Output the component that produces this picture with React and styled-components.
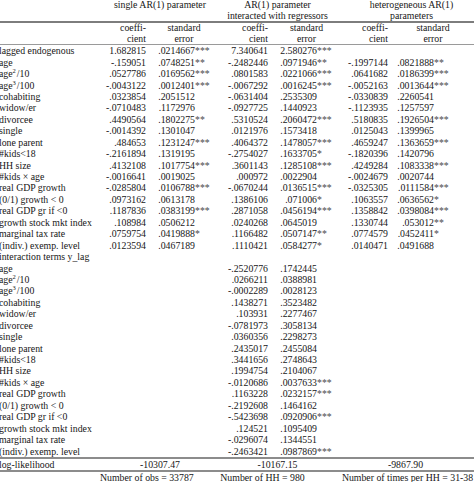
import React from 'react';
import styled, { createGlobalStyle } from 'styled-components';

const GlobalStyle = createGlobalStyle`
  html, body { margin: 0; padding: 0; background: #fff; overflow: hidden; }
`;

const COLS = '101px 48px 72px 50px 65px 55px 86px';
const ROW_H = 11.45;

const Page = styled.div`
  margin-left: -1px;
  width: 477px;
  font-family: "Liberation Serif", "Times New Roman", serif;
  font-size: 9.8px;
  color: #161616;
`;

const Row = styled.div`
  display: grid;
  grid-template-columns: ${COLS};
  height: ${(p) => p.$h || ROW_H}px;
  align-items: center;
  white-space: nowrap;
`;

const GroupHead = styled.div`
  grid-column: ${(p) => p.$col} / span 2;
  text-align: center;
  line-height: 10.5px;
  padding-left: ${(p) => p.$shift || 0}px;
`;

const Rule = styled.div`
  height: ${(p) => p.$w || 1}px;
  background: ${(p) => p.$c || '#8c8c8c'};
`;

const Label = styled.div`
  grid-column: 1;
`;

const Sup = styled.sup`
  font-size: 6.5px;
  vertical-align: 4px;
  line-height: 0;
  margin-right: 1px;
`;

const Coef = styled.div`
  grid-column: ${(p) => p.$col};
  text-align: right;
  padding-right: 2px;
  line-height: ${(p) => p.$lh || 'normal'};
`;

const SE = styled.div`
  grid-column: ${(p) => p.$col};
  padding-left: ${(p) => p.$pad}px;
`;

const Num = styled.span`
  display: inline-block;
  width: 37px;
  text-align: right;
`;

const Stars = styled.span`
  color: #4a4a4a;
  font-size: 9.8px;
`;

const HeadSE = styled.div`
  grid-column: ${(p) => p.$col};
  text-align: center;
  line-height: 10.5px;
  padding-left: ${(p) => p.$shift || 0}px;
`;

const Wide = styled.div`
  grid-column: ${(p) => p.$col} / span 2;
  text-align: center;
  padding-right: ${(p) => p.$pr || 0}px;
  padding-left: ${(p) => p.$pl || 0}px;
`;

const LabelCell = ({ name }) => {
  if (name === 'age2') return <Label>age<Sup>2</Sup>/10</Label>;
  if (name === 'age3') return <Label>age<Sup>3</Sup>/100</Label>;
  return <Label>{name}</Label>;
};

const SECells = ({ v, col, pad }) => {
  if (!v) return null;
  const m = v.match(/^([^*]*)(\**)$/);
  return (
    <SE $col={col} $pad={pad}>
      <Num>{m[1]}</Num>
      {m[2] && <Stars>{m[2]}</Stars>}
    </SE>
  );
};

const SE_PAD = { 3: 10, 5: 10, 7: 7 };

const DataRow = ({ r }) => (
  <Row>
    <LabelCell name={r[0]} />
    {r[1] && <Coef $col={2}>{r[1]}</Coef>}
    <SECells v={r[2]} col={3} pad={SE_PAD[3]} />
    {r[3] && <Coef $col={4}>{r[3]}</Coef>}
    <SECells v={r[4]} col={5} pad={SE_PAD[5]} />
    {r[5] && <Coef $col={6}>{r[5]}</Coef>}
    <SECells v={r[6]} col={7} pad={SE_PAD[7]} />
  </Row>
);

const block1 = [
  ['lagged endogenous', '1.682815', '.0214667***', '7.340641', '2.580276***', '', ''],
  ['age', '-.159051', '.0748251**', '-.2482446', '.0971946**', '-.1997144', '.0821888**'],
  ['age2', '.0527786', '.0169562***', '.0801583', '.0221066***', '.0641682', '.0186399***'],
  ['age3', '-.0043122', '.0012401***', '-.0067292', '.0016245***', '-.0052163', '.0013644***'],
  ['cohabiting', '.0323854', '.2051512', '-.0631404', '.2535309', '-.0330839', '.2260541'],
  ['widow/er', '-.0710483', '.1172976', '-.0927725', '.1440923', '-.1123935', '.1257597'],
  ['divorcee', '.4490564', '.1802275**', '.5310524', '.2060472***', '.5180835', '.1926504***'],
  ['single', '-.0014392', '.1301047', '.0121976', '.1573418', '.0125043', '.1399965'],
  ['lone parent', '.484653', '.1231247***', '.4064372', '.1478057***', '.4659247', '.1363659***'],
  ['#kids<18', '-.2161894', '.1319195', '-.2754027', '.1633705*', '-.1820396', '.1420796'],
  ['HH size', '.4132108', '.1017754***', '.3601143', '.1285108***', '.4249284', '.1083338***'],
  ['#kids × age', '-.0016641', '.0019025', '.000972', '.0022904', '-.0024679', '.0020744'],
  ['real GDP growth', '-.0285804', '.0106788***', '-.0670244', '.0136515***', '-.0325305', '.0111584***'],
  ['(0/1) growth < 0', '.0973162', '.0613178', '.1386106', '.071006*', '.1063557', '.0636562*'],
  ['real GDP gr if <0', '.1187836', '.0383199***', '.2871058', '.0456194***', '.1358842', '.0398084***'],
  ['growth stock mkt index', '.108984', '.0506212', '.0240268', '.0645019', '.1330744', '.053012**'],
  ['marginal tax rate', '.0759754', '.0419888*', '.1166482', '.0507147**', '.0774579', '.0452411*'],
  ['(indiv.) exemp. level', '.0123594', '.0467189', '.1110421', '.0584277*', '.0140471', '.0491688'],
];

const block2 = [
  ['age', '', '', '-.2520776', '.1742445', '', ''],
  ['age2', '', '', '.0266211', '.0388981', '', ''],
  ['age3', '', '', '-.0002289', '.0028123', '', ''],
  ['cohabiting', '', '', '.1438271', '.3523482', '', ''],
  ['widow/er', '', '', '.103931', '.2277467', '', ''],
  ['divorcee', '', '', '-.0781973', '.3058134', '', ''],
  ['single', '', '', '.0360356', '.2298273', '', ''],
  ['lone parent', '', '', '.2435017', '.2455084', '', ''],
  ['#kids<18', '', '', '.3441656', '.2748643', '', ''],
  ['HH size', '', '', '.1994754', '.2104067', '', ''],
  ['#kids × age', '', '', '-.0120686', '.0037633***', '', ''],
  ['real GDP growth', '', '', '.1163228', '.0232157***', '', ''],
  ['(0/1) growth < 0', '', '', '-.2192608', '.1464162', '', ''],
  ['real GDP gr if <0', '', '', '-.5423698', '.0920906***', '', ''],
  ['growth stock mkt index', '', '', '.124521', '.1095409', '', ''],
  ['marginal tax rate', '', '', '-.0296074', '.1344551', '', ''],
  ['(indiv.) exemp. level', '', '', '-.2463421', '.0987869***', '', ''],
];

export default function App() {
  return (
    <>
      <GlobalStyle />
      <Page>
        <Row $h={21}>
          <GroupHead $col={2}>single AR(1) parameter<br />&nbsp;</GroupHead>
          <GroupHead $col={4}>AR(1) parameter<br />interacted with regressors</GroupHead>
          <GroupHead $col={6} $shift={12}>heterogeneous AR(1)<br />parameters</GroupHead>
        </Row>
        <Rule $w={2} $c="#7d7d7d" />
        <Row $h={21}>
          <Coef $col={2} $lh="10.5px">coeffi-<br />cient</Coef>
          <HeadSE $col={3} $shift={-4}>standard<br />error</HeadSE>
          <Coef $col={4} $lh="10.5px">coeffi-<br />cient</Coef>
          <HeadSE $col={5} $shift={8}>standard<br />error</HeadSE>
          <Coef $col={6} $lh="10.5px">coeffi-<br />cient</Coef>
          <HeadSE $col={7} $shift={-4}>standard<br />error</HeadSE>
        </Row>
        <Rule $w={1} $c="#9a9a9a" />
        {block1.map((r, i) => <DataRow key={'a' + i} r={r} />)}
        <Row>
          <Label>interaction terms y_lag</Label>
        </Row>
        {block2.map((r, i) => <DataRow key={'b' + i} r={r} />)}
        <Rule $w={2} $c="#8c8c8c" />
        <Row $h={11}>
          <Label>log-likelihood</Label>
          <Wide $col={2}>-10307.47</Wide>
          <Wide $col={4}>-10167.15</Wide>
          <Wide $col={6}>-9867.90</Wide>
        </Row>
        <Rule $w={2} $c="#8c8c8c" />
        <Row $h={11}>
          <Wide $col={2} $pr={30}>Number of obs = 33787</Wide>
          <Wide $col={4} $pr={30}>Number of HH = 980</Wide>
          <Wide $col={6} $pl={4}>Number of times per HH = 31-38</Wide>
        </Row>
      </Page>
    </>
  );
}
